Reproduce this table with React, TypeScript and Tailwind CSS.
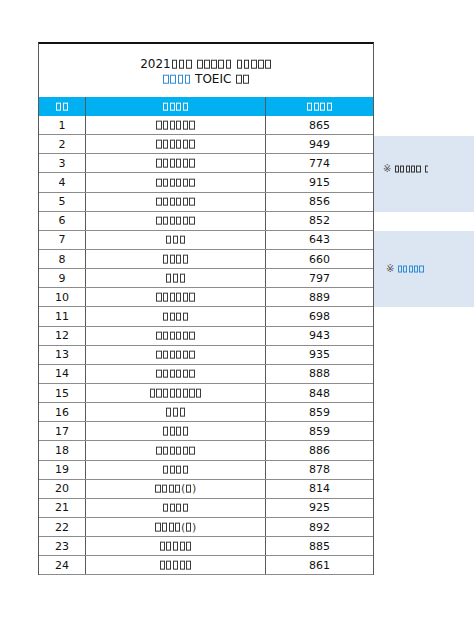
import React from "react";

function Tofu({ n }: { n: number }) {
  return (
    <>
      {Array.from({ length: n }).map((_, i) => (
        <span key={i} className="inline-block w-[0.6em] align-baseline">
          <span className="mx-auto block h-[0.76em] w-[0.47em] translate-y-[0.06em] border border-current" />
        </span>
      ))}
    </>
  );
}

type Row = [number, number, boolean, number];

const rows: Row[] = [
  [1, 6, false, 865],
  [2, 6, false, 949],
  [3, 6, false, 774],
  [4, 6, false, 915],
  [5, 6, false, 856],
  [6, 6, false, 852],
  [7, 3, false, 643],
  [8, 4, false, 660],
  [9, 3, false, 797],
  [10, 6, false, 889],
  [11, 4, false, 698],
  [12, 6, false, 943],
  [13, 6, false, 935],
  [14, 6, false, 888],
  [15, 8, false, 848],
  [16, 3, false, 859],
  [17, 4, false, 859],
  [18, 6, false, 886],
  [19, 4, false, 878],
  [20, 4, true, 814],
  [21, 4, false, 925],
  [22, 4, true, 892],
  [23, 5, false, 885],
  [24, 5, false, 861],
];

export default function App() {
  return (
    <div className="w-[474px] min-h-[632px] overflow-hidden bg-white font-['DejaVu_Sans',sans-serif]">
      <div className="flex pl-[38px] pt-[42px]">
        <div className="w-[336px] shrink-0 border-x border-x-[#595959] border-t-2 border-t-[#111]">
          <div className="flex h-[53px] flex-col items-center justify-center pt-[3px] text-[12px] leading-[15px] text-[#111]">
            <div className="whitespace-nowrap">
              2021<span className="text-[#333]"><Tofu n={3} /> <Tofu n={5} /> <Tofu n={5} /></span>
            </div>
            <div className="whitespace-nowrap">
              <span className="text-[#2e8bd6]">
                <Tofu n={4} />
              </span>{" "}
              TOEIC{" "}
              <span className="text-[#333]">
                <Tofu n={2} />
              </span>
            </div>
          </div>
          <div className="grid h-[19px] grid-cols-[47px_180px_107px] bg-[#00b0f0] text-[11px] leading-[13px] text-white">
            <div className="flex items-center justify-center border-r border-[#595959]">
              <span><Tofu n={2} /></span>
            </div>
            <div className="flex items-center justify-center border-r border-[#595959]">
              <span><Tofu n={4} /></span>
            </div>
            <div className="flex items-center justify-center">
              <span><Tofu n={4} /></span>
            </div>
          </div>
          {rows.map(([n, count, paren, score]) => (
            <div
              key={n}
              className="grid h-[19.15px] grid-cols-[47px_180px_107px] border-b border-[#8c8c8c] text-[11px] leading-[13px] text-[#111]"
            >
              <div className="flex items-center justify-center border-r border-[#595959]">{n}</div>
              <div className="flex items-center justify-center border-r border-[#595959] text-[#3a3a3a]">
                <span className="whitespace-nowrap">
                  <Tofu n={count} />
                  {paren ? (
                    <>
                      (<Tofu n={1} />)
                    </>
                  ) : null}
                </span>
              </div>
              <div className="flex items-center justify-center">{score}</div>
            </div>
          ))}
        </div>
        <div className="flex w-[100px] shrink-0 flex-col pt-[94px]">
          <div className="h-[76px] bg-[#dce6f2] pl-[9px] pt-[27px] text-[9px] leading-[11px] text-[#333]">
            <span className="inline-block w-[45px] overflow-hidden whitespace-nowrap align-top">
              <span className="text-[10px] text-[#555]">※</span> <Tofu n={5} /> <Tofu n={2} />
            </span>
          </div>
          <div className="mt-[19px] h-[76px] bg-[#dce6f2] pl-[12px] pt-[32px] text-[9px] leading-[11px]">
            <span className="whitespace-nowrap">
              <span className="text-[10px] text-[#555]">※</span>{" "}
              <span className="text-[#2e8bd6]">
                <Tofu n={5} />
              </span>
            </span>
          </div>
        </div>
      </div>
    </div>
  );
}
